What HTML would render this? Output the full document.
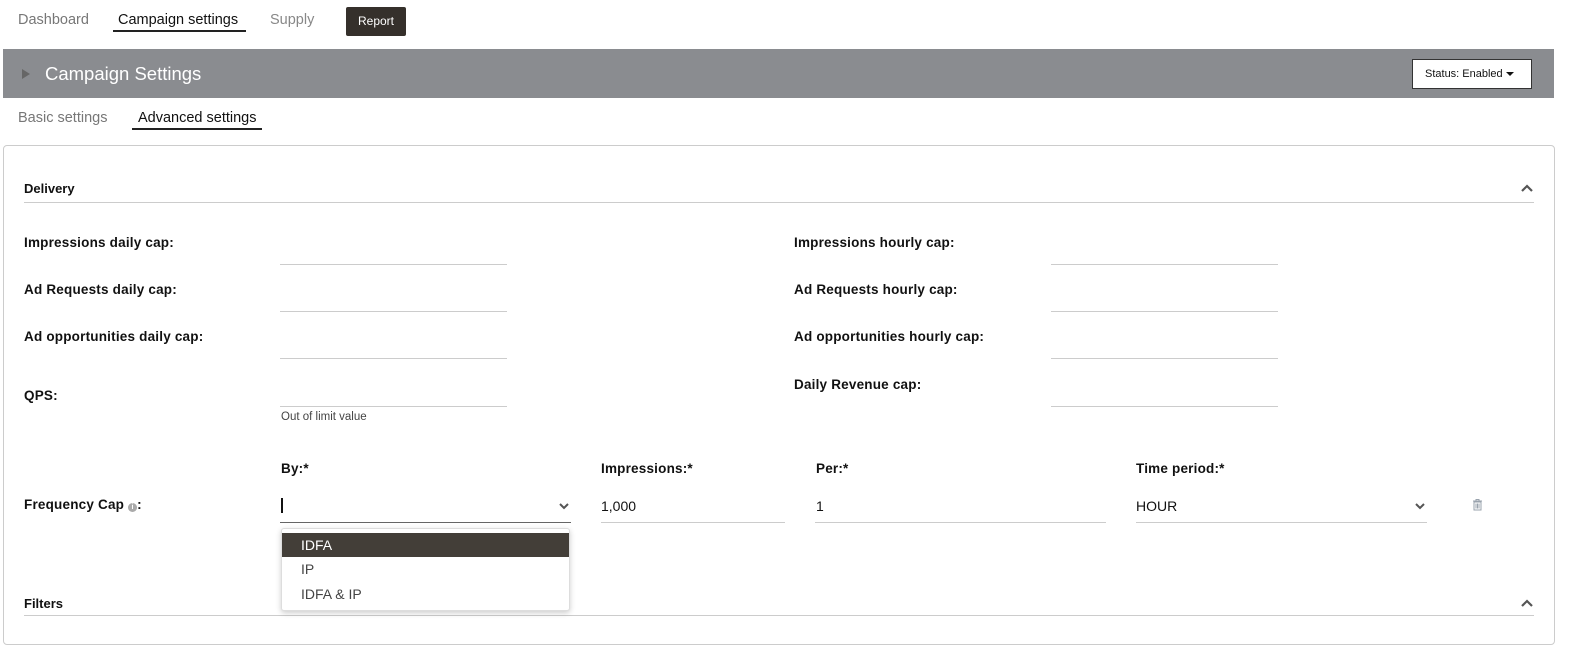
<!DOCTYPE html>
<html><head><style>
*{margin:0;padding:0;box-sizing:border-box}
body{width:1589px;height:634px;overflow:hidden;background:#fff;font-family:"Liberation Sans",sans-serif;color:#111;position:relative;font-size:13px}
.a{position:absolute;white-space:nowrap}
.ln{position:absolute;height:1px;background:#ccc}
.lb{font-size:13.5px;color:#111;font-weight:bold;letter-spacing:0.2px}
.b{font-weight:bold}
.v{font-size:14px;color:#111}
</style></head><body>
<div class="a" style="left:18px;top:12px;font-size:14.5px;color:#777">Dashboard</div>
<div class="a" style="left:118px;top:12px;font-size:14.5px;color:#111">Campaign settings</div>
<div class="a" style="left:113px;top:30px;width:133px;height:2px;background:#222"></div>
<div class="a" style="left:270px;top:12px;font-size:14.5px;color:#888">Supply</div>
<div class="a" style="left:346px;top:7px;width:60px;height:29px;background:#35302b;border-radius:2px;color:#fff;font-size:12px;text-align:center;line-height:29px">Report</div>

<div class="a" style="left:3px;top:49px;width:1551px;height:49px;background:#8a8c90"></div>
<div class="a" style="left:22px;top:69px;width:0;height:0;border-left:8px solid #666;border-top:5px solid transparent;border-bottom:5px solid transparent"></div>
<div class="a" style="left:45px;top:63px;font-size:18.5px;color:#fff">Campaign Settings</div>
<div class="a" style="left:1412px;top:59px;width:120px;height:30px;background:#fff;border:1px solid #333;font-size:11px;line-height:28px;padding-left:12px">Status: Enabled <span style="display:inline-block;border-top:4px solid #111;border-left:4px solid transparent;border-right:4px solid transparent;vertical-align:middle"></span></div>

<div class="a" style="left:18px;top:110px;font-size:14.5px;color:#777">Basic settings</div>
<div class="a" style="left:138px;top:110px;font-size:14.5px;color:#111">Advanced settings</div>
<div class="a" style="left:132px;top:128px;width:130px;height:2px;background:#222"></div>

<div class="a" style="left:3px;top:145px;width:1552px;height:500px;border:1px solid #ccc;border-radius:4px"></div>

<div class="a b" style="left:24px;top:181px;font-size:13px">Delivery</div>
<div class="ln" style="left:24px;top:202px;width:1510px"></div>
<svg class="a" style="left:1520px;top:183px" width="14" height="10"><path d="M2 8 L7 3 L12 8" stroke="#555" stroke-width="2.2" fill="none"/></svg>

<div class="a lb" style="left:24px;top:235px">Impressions daily cap:</div>
<div class="a lb" style="left:24px;top:282px">Ad Requests daily cap:</div>
<div class="a lb" style="left:24px;top:329px">Ad opportunities daily cap:</div>
<div class="a lb" style="left:24px;top:388px">QPS:</div>
<div class="ln" style="left:280px;top:264px;width:227px"></div>
<div class="ln" style="left:280px;top:311px;width:227px"></div>
<div class="ln" style="left:280px;top:358px;width:227px"></div>
<div class="ln" style="left:280px;top:406px;width:227px"></div>
<div class="a" style="left:281px;top:411px;font-size:11.5px;color:#444">Out of limit value</div>

<div class="a lb" style="left:794px;top:235px">Impressions hourly cap:</div>
<div class="a lb" style="left:794px;top:282px">Ad Requests hourly cap:</div>
<div class="a lb" style="left:794px;top:329px">Ad opportunities hourly cap:</div>
<div class="a lb" style="left:794px;top:377px">Daily Revenue cap:</div>
<div class="ln" style="left:1051px;top:264px;width:227px"></div>
<div class="ln" style="left:1051px;top:311px;width:227px"></div>
<div class="ln" style="left:1051px;top:358px;width:227px"></div>
<div class="ln" style="left:1051px;top:406px;width:227px"></div>

<div class="a lb" style="left:281px;top:461px">By:*</div>
<div class="a lb" style="left:601px;top:461px">Impressions:*</div>
<div class="a lb" style="left:816px;top:461px">Per:*</div>
<div class="a lb" style="left:1136px;top:461px">Time period:*</div>

<div class="a lb" style="left:24px;top:497px">Frequency Cap <span style="display:inline-block;width:9px;height:9px;border-radius:50%;background:#aaa;color:#fff;font-size:7px;line-height:9px;text-align:center;vertical-align:0">i</span>:</div>
<div class="a" style="left:281px;top:498px;width:1.5px;height:15px;background:#111"></div>
<svg class="a" style="left:558px;top:502px" width="12" height="9"><path d="M2 2 L6 6 L10 2" stroke="#555" stroke-width="2" fill="none"/></svg>
<div class="a" style="left:280px;top:522px;width:291px;height:1px;background:#666"></div>
<div class="a v" style="left:601px;top:498px">1,000</div>
<div class="ln" style="left:601px;top:522px;width:184px"></div>
<div class="a v" style="left:816px;top:498px">1</div>
<div class="ln" style="left:815px;top:522px;width:291px"></div>
<div class="a v" style="left:1136px;top:498px">HOUR</div>
<svg class="a" style="left:1414px;top:502px" width="12" height="9"><path d="M2 2 L6 6 L10 2" stroke="#555" stroke-width="2" fill="none"/></svg>
<div class="ln" style="left:1136px;top:522px;width:291px"></div>
<svg class="a" style="left:1472px;top:498px" width="11" height="13"><path d="M1 3 H10 M4 3 V1.5 H7 V3 M2 4 H9 V12 H2 Z M4 5.5 V10.5 M5.5 5.5 V10.5 M7 5.5 V10.5" stroke="#9aa3ad" stroke-width="1" fill="none"/></svg>

<div class="a b" style="left:24px;top:596px">Filters</div>
<div class="ln" style="left:24px;top:615px;width:1510px"></div>
<svg class="a" style="left:1520px;top:598px" width="14" height="10"><path d="M2 8 L7 3 L12 8" stroke="#555" stroke-width="2.2" fill="none"/></svg>

<div class="a" style="left:281px;top:528px;width:289px;height:83px;background:#fff;border:1px solid #ddd;border-radius:3px;box-shadow:0 2px 6px rgba(0,0,0,.2);font-size:14px">
<div style="position:absolute;left:0;top:4px;width:287px;height:24px;background:#433e38;color:#fff;padding-left:19px;line-height:24px">IDFA</div>
<div style="position:absolute;left:19px;top:32px;color:#444">IP</div>
<div style="position:absolute;left:19px;top:57px;color:#444">IDFA &amp; IP</div>
</div>
</body></html>
